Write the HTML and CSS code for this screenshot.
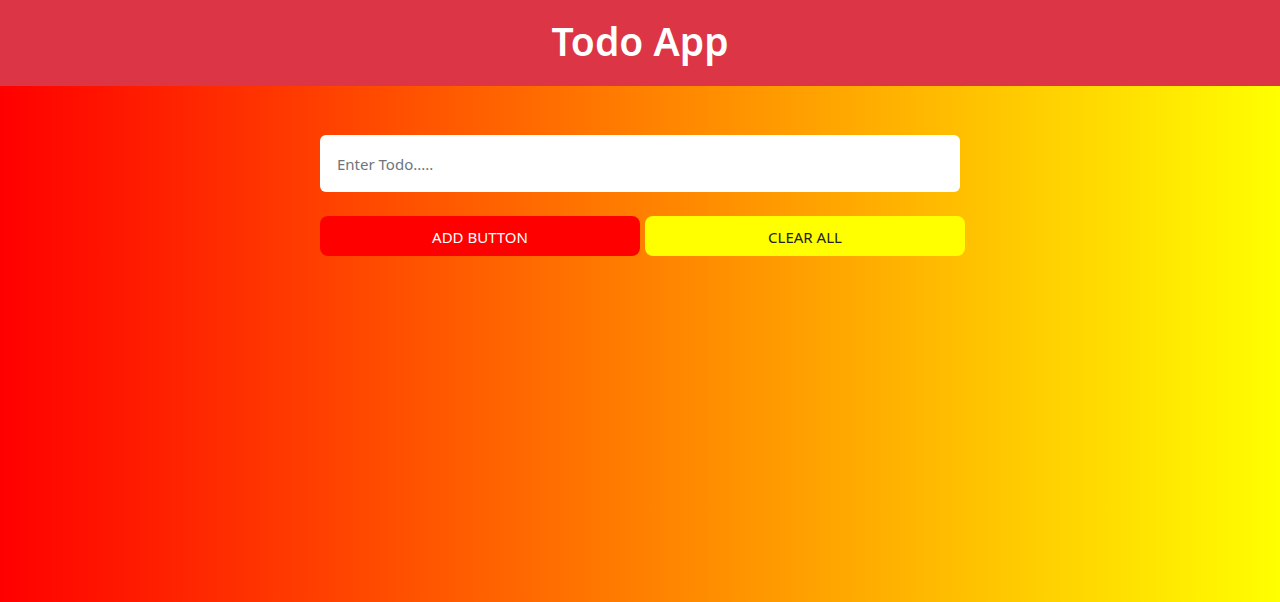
FILE: index.html
```html
<!DOCTYPE html>
<html>
<head>
<meta charset="utf-8">
<link rel="stylesheet" href="styles.css">
</head>
<body>
<header class="header"><h1 class="title">Todo App</h1></header>
<main class="main">
  <div class="panel">
    <input class="todo-input" type="text" placeholder="Enter Todo.....">
    <div class="actions">
      <button class="btn btn-add">ADD BUTTON</button>
      <button class="btn btn-clear">CLEAR ALL</button>
    </div>
  </div>
</main>
</body>
</html>
```
FILE: styles.css
```css
* { box-sizing: border-box; }
html, body { height: 100%; }
body {
  margin: 0;
  font-family: "Noto Sans", "Open Sans", sans-serif;
  background: linear-gradient(to right, #ff0000, #ffff00);
  display: flex;
  flex-direction: column;
}
.header {
  background: #dc3545;
  height: 86px;
  display: flex;
  align-items: center;
  justify-content: center;
  padding-bottom: 5px;
}
.title {
  margin: 0;
  color: #fff;
  font-size: 39px;
  font-weight: 600;
  letter-spacing: 0;
}
.main { flex: 1; }
.panel {
  width: 640px;
  margin: 49px auto 0;
}
.todo-input {
  display: block;
  width: 640px;
  height: 57px;
  border: none;
  border-radius: 6px;
  padding: 0 17px;
  font-family: inherit;
  font-size: 15px;
  background: #fff;
  outline: none;
}
.todo-input::placeholder { color: #6c757d; }
.actions {
  display: flex;
  gap: 5px;
  margin-top: 24px;
}
.btn {
  flex: 0 0 320px;
  height: 40px;
  border: none;
  border-radius: 8px;
  font-family: inherit;
  font-size: 15px;
  padding-top: 2px;
}
.btn-add { background: #ff0000; color: #fff; }
.btn-clear { background: #ffff00; color: #222; }
```
